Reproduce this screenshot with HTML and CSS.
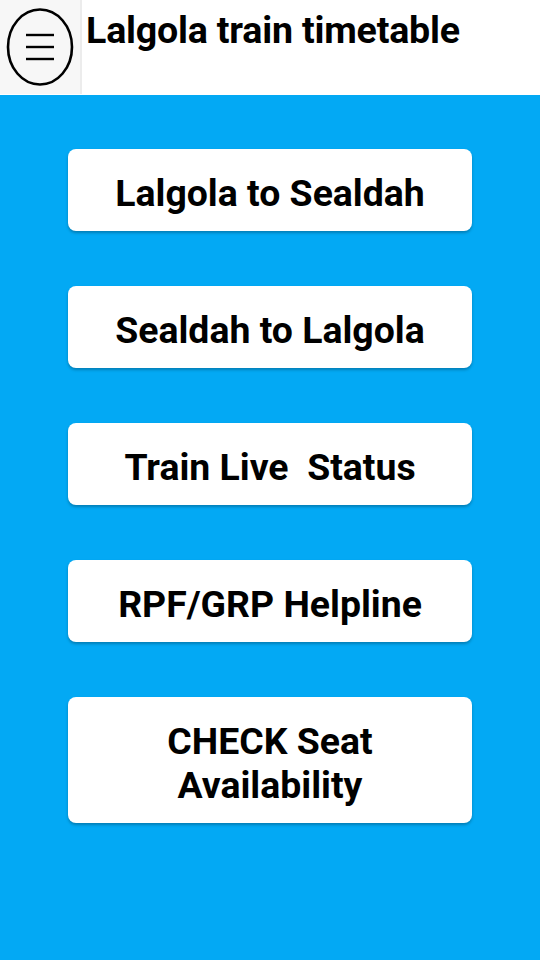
FILE: index.html
```html
<!DOCTYPE html>
<html>
<head>
<meta charset="utf-8">
<link rel="stylesheet" href="styles.css">
</head>
<body>
<div class="app">
  <header class="header">
    <div class="menu">
      <svg width="80" height="94" viewBox="0 0 80 94">
        <ellipse cx="40" cy="47" rx="32" ry="37.5" fill="none" stroke="#000" stroke-width="2.6"/>
        <line x1="26" y1="35" x2="54" y2="35" stroke="#000" stroke-width="2.4"/>
        <line x1="26" y1="47" x2="54" y2="47" stroke="#000" stroke-width="2.4"/>
        <line x1="26" y1="59" x2="54" y2="59" stroke="#000" stroke-width="2.4"/>
      </svg>
    </div>
    <div class="title">Lalgola train timetable</div>
  </header>
  <main class="list">
    <div class="btn">Lalgola to Sealdah</div>
    <div class="btn">Sealdah to Lalgola</div>
    <div class="btn">Train Live&nbsp; Status</div>
    <div class="btn">RPF/GRP Helpline</div>
    <div class="btn tall">CHECK Seat<br>Availability</div>
  </main>
</div>
</body>
</html>
```
FILE: styles.css
```css
html, body {
  margin: 0;
  padding: 0;
}
body {
  width: 540px;
  height: 960px;
  background: #03a9f4;
  font-family: Roboto, "Noto Sans", sans-serif;
  overflow: hidden;
}
.header {
  display: flex;
  height: 95px;
  background: #fff;
}
.menu {
  width: 80px;
  height: 94px;
  background: #f7f7f7;
  border-right: 2px solid #ececec;
}
.menu svg {
  display: block;
}
.title {
  flex: 1;
  padding-left: 4px;
  padding-top: 8px;
  font-size: 37.6px;
  font-weight: 700;
  color: #000;
  line-height: 44px;
  letter-spacing: -0.2px;
}
.list {
  display: flex;
  flex-direction: column;
  gap: 55px;
  padding: 54px 68px 0 68px;
}
.btn {
  height: 82px;
  background: #fff;
  border-radius: 8px;
  box-shadow: 0 2px 3px rgba(0,0,0,0.25);
  display: flex;
  align-items: center;
  justify-content: center;
  text-align: center;
  font-size: 37.4px;
  font-weight: 700;
  color: #000;
  line-height: 44px;
  padding-top: 5px;
  box-sizing: border-box;
}
.btn.tall {
  height: 126px;
}
```
